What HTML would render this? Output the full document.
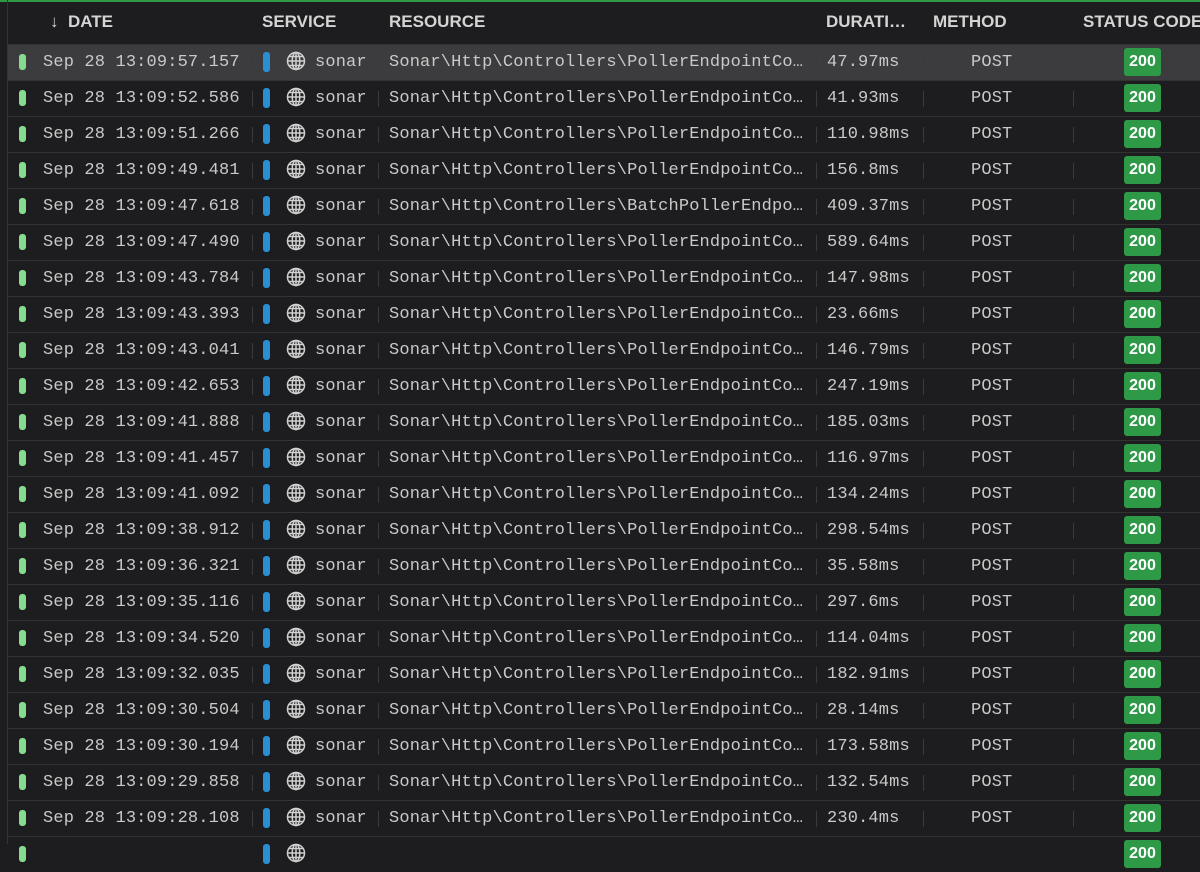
<!DOCTYPE html>
<html><head><meta charset="utf-8"><style>
*{margin:0;padding:0;box-sizing:border-box}
i{font-style:normal}
body{width:1200px;height:844px;overflow:hidden;background:#1d1d1f;font-family:"Liberation Mono",monospace;color:#c9c9c9;position:relative}
.top{position:absolute;left:0;top:0;width:1200px;height:2px;background:#2f9a45}
.lb{position:absolute;left:7px;top:0;width:1px;height:844px;background:#333}
.hd{position:absolute;top:0;left:8px;right:0;height:44px;font-family:"Liberation Sans",sans-serif;font-weight:bold;font-size:17px;color:#d4d4d4}
.hd span{position:absolute;top:12px;white-space:nowrap}
.r{position:absolute;left:8px;right:0;height:36px;border-top:1px solid #333}
.r.s{background:#3c3c3e}
.r span{position:absolute;top:8px;font-size:17px;white-space:nowrap;letter-spacing:0.15px}
.g{position:absolute;left:11px;top:9px;width:7px;height:16px;border-radius:3px;background:#86dc8e}
.b{position:absolute;left:255px;top:7px;width:7px;height:20px;border-radius:3px;background:#2a8fd2}
.sep{position:absolute;top:10px;width:1px;height:16px;background:#3a3a3a}
.gl{position:absolute;left:278px;top:6px}
.bd{position:absolute;left:1116px;top:3px;width:37px;height:28px;border-radius:3px;background:#2e9a48;color:#fff;font-family:"Liberation Sans",sans-serif;font-weight:bold;font-size:16px;text-align:center;line-height:28px}
</style></head><body>
<div class="top"></div><div class="lb"></div>
<div class="hd"><span style="left:42px">&#8595;&nbsp; DATE</span><span style="left:254px">SERVICE</span><span style="left:381px">RESOURCE</span><span style="left:818px">DURATI…</span><span style="left:925px">METHOD</span><span style="left:1075px">STATUS CODE</span></div>
<svg width="0" height="0" style="position:absolute"><defs><g id="glb" fill="none" stroke="#d0d0d0" stroke-width="1.5"><circle cx="10" cy="10" r="8.5"/><ellipse cx="10" cy="10" rx="3.8" ry="8.5"/><line x1="10" y1="1.5" x2="10" y2="18.5"/><line x1="1.5" y1="10" x2="18.5" y2="10"/><path d="M3 5.5h14M3 14.5h14"/></g></defs></svg>
<div class="r s" style="top:44px"><i class="g"></i><span style="left:35px">Sep 28 13:09:57.157</span><i class="sep" style="left:244px"></i><i class="b"></i><svg class="gl" width="20" height="20"><use href="#glb"/></svg><span style="left:307px">sonar</span><i class="sep" style="left:370px"></i><span style="left:381px">Sonar\Http\Controllers\PollerEndpointCo…</span><i class="sep" style="left:808px"></i><span style="left:819px">47.97ms</span><i class="sep" style="left:915px"></i><span style="left:963px">POST</span><i class="sep" style="left:1065px"></i><i class="bd">200</i></div>
<div class="r" style="top:80px"><i class="g"></i><span style="left:35px">Sep 28 13:09:52.586</span><i class="sep" style="left:244px"></i><i class="b"></i><svg class="gl" width="20" height="20"><use href="#glb"/></svg><span style="left:307px">sonar</span><i class="sep" style="left:370px"></i><span style="left:381px">Sonar\Http\Controllers\PollerEndpointCo…</span><i class="sep" style="left:808px"></i><span style="left:819px">41.93ms</span><i class="sep" style="left:915px"></i><span style="left:963px">POST</span><i class="sep" style="left:1065px"></i><i class="bd">200</i></div>
<div class="r" style="top:116px"><i class="g"></i><span style="left:35px">Sep 28 13:09:51.266</span><i class="sep" style="left:244px"></i><i class="b"></i><svg class="gl" width="20" height="20"><use href="#glb"/></svg><span style="left:307px">sonar</span><i class="sep" style="left:370px"></i><span style="left:381px">Sonar\Http\Controllers\PollerEndpointCo…</span><i class="sep" style="left:808px"></i><span style="left:819px">110.98ms</span><i class="sep" style="left:915px"></i><span style="left:963px">POST</span><i class="sep" style="left:1065px"></i><i class="bd">200</i></div>
<div class="r" style="top:152px"><i class="g"></i><span style="left:35px">Sep 28 13:09:49.481</span><i class="sep" style="left:244px"></i><i class="b"></i><svg class="gl" width="20" height="20"><use href="#glb"/></svg><span style="left:307px">sonar</span><i class="sep" style="left:370px"></i><span style="left:381px">Sonar\Http\Controllers\PollerEndpointCo…</span><i class="sep" style="left:808px"></i><span style="left:819px">156.8ms</span><i class="sep" style="left:915px"></i><span style="left:963px">POST</span><i class="sep" style="left:1065px"></i><i class="bd">200</i></div>
<div class="r" style="top:188px"><i class="g"></i><span style="left:35px">Sep 28 13:09:47.618</span><i class="sep" style="left:244px"></i><i class="b"></i><svg class="gl" width="20" height="20"><use href="#glb"/></svg><span style="left:307px">sonar</span><i class="sep" style="left:370px"></i><span style="left:381px">Sonar\Http\Controllers\BatchPollerEndpo…</span><i class="sep" style="left:808px"></i><span style="left:819px">409.37ms</span><i class="sep" style="left:915px"></i><span style="left:963px">POST</span><i class="sep" style="left:1065px"></i><i class="bd">200</i></div>
<div class="r" style="top:224px"><i class="g"></i><span style="left:35px">Sep 28 13:09:47.490</span><i class="sep" style="left:244px"></i><i class="b"></i><svg class="gl" width="20" height="20"><use href="#glb"/></svg><span style="left:307px">sonar</span><i class="sep" style="left:370px"></i><span style="left:381px">Sonar\Http\Controllers\PollerEndpointCo…</span><i class="sep" style="left:808px"></i><span style="left:819px">589.64ms</span><i class="sep" style="left:915px"></i><span style="left:963px">POST</span><i class="sep" style="left:1065px"></i><i class="bd">200</i></div>
<div class="r" style="top:260px"><i class="g"></i><span style="left:35px">Sep 28 13:09:43.784</span><i class="sep" style="left:244px"></i><i class="b"></i><svg class="gl" width="20" height="20"><use href="#glb"/></svg><span style="left:307px">sonar</span><i class="sep" style="left:370px"></i><span style="left:381px">Sonar\Http\Controllers\PollerEndpointCo…</span><i class="sep" style="left:808px"></i><span style="left:819px">147.98ms</span><i class="sep" style="left:915px"></i><span style="left:963px">POST</span><i class="sep" style="left:1065px"></i><i class="bd">200</i></div>
<div class="r" style="top:296px"><i class="g"></i><span style="left:35px">Sep 28 13:09:43.393</span><i class="sep" style="left:244px"></i><i class="b"></i><svg class="gl" width="20" height="20"><use href="#glb"/></svg><span style="left:307px">sonar</span><i class="sep" style="left:370px"></i><span style="left:381px">Sonar\Http\Controllers\PollerEndpointCo…</span><i class="sep" style="left:808px"></i><span style="left:819px">23.66ms</span><i class="sep" style="left:915px"></i><span style="left:963px">POST</span><i class="sep" style="left:1065px"></i><i class="bd">200</i></div>
<div class="r" style="top:332px"><i class="g"></i><span style="left:35px">Sep 28 13:09:43.041</span><i class="sep" style="left:244px"></i><i class="b"></i><svg class="gl" width="20" height="20"><use href="#glb"/></svg><span style="left:307px">sonar</span><i class="sep" style="left:370px"></i><span style="left:381px">Sonar\Http\Controllers\PollerEndpointCo…</span><i class="sep" style="left:808px"></i><span style="left:819px">146.79ms</span><i class="sep" style="left:915px"></i><span style="left:963px">POST</span><i class="sep" style="left:1065px"></i><i class="bd">200</i></div>
<div class="r" style="top:368px"><i class="g"></i><span style="left:35px">Sep 28 13:09:42.653</span><i class="sep" style="left:244px"></i><i class="b"></i><svg class="gl" width="20" height="20"><use href="#glb"/></svg><span style="left:307px">sonar</span><i class="sep" style="left:370px"></i><span style="left:381px">Sonar\Http\Controllers\PollerEndpointCo…</span><i class="sep" style="left:808px"></i><span style="left:819px">247.19ms</span><i class="sep" style="left:915px"></i><span style="left:963px">POST</span><i class="sep" style="left:1065px"></i><i class="bd">200</i></div>
<div class="r" style="top:404px"><i class="g"></i><span style="left:35px">Sep 28 13:09:41.888</span><i class="sep" style="left:244px"></i><i class="b"></i><svg class="gl" width="20" height="20"><use href="#glb"/></svg><span style="left:307px">sonar</span><i class="sep" style="left:370px"></i><span style="left:381px">Sonar\Http\Controllers\PollerEndpointCo…</span><i class="sep" style="left:808px"></i><span style="left:819px">185.03ms</span><i class="sep" style="left:915px"></i><span style="left:963px">POST</span><i class="sep" style="left:1065px"></i><i class="bd">200</i></div>
<div class="r" style="top:440px"><i class="g"></i><span style="left:35px">Sep 28 13:09:41.457</span><i class="sep" style="left:244px"></i><i class="b"></i><svg class="gl" width="20" height="20"><use href="#glb"/></svg><span style="left:307px">sonar</span><i class="sep" style="left:370px"></i><span style="left:381px">Sonar\Http\Controllers\PollerEndpointCo…</span><i class="sep" style="left:808px"></i><span style="left:819px">116.97ms</span><i class="sep" style="left:915px"></i><span style="left:963px">POST</span><i class="sep" style="left:1065px"></i><i class="bd">200</i></div>
<div class="r" style="top:476px"><i class="g"></i><span style="left:35px">Sep 28 13:09:41.092</span><i class="sep" style="left:244px"></i><i class="b"></i><svg class="gl" width="20" height="20"><use href="#glb"/></svg><span style="left:307px">sonar</span><i class="sep" style="left:370px"></i><span style="left:381px">Sonar\Http\Controllers\PollerEndpointCo…</span><i class="sep" style="left:808px"></i><span style="left:819px">134.24ms</span><i class="sep" style="left:915px"></i><span style="left:963px">POST</span><i class="sep" style="left:1065px"></i><i class="bd">200</i></div>
<div class="r" style="top:512px"><i class="g"></i><span style="left:35px">Sep 28 13:09:38.912</span><i class="sep" style="left:244px"></i><i class="b"></i><svg class="gl" width="20" height="20"><use href="#glb"/></svg><span style="left:307px">sonar</span><i class="sep" style="left:370px"></i><span style="left:381px">Sonar\Http\Controllers\PollerEndpointCo…</span><i class="sep" style="left:808px"></i><span style="left:819px">298.54ms</span><i class="sep" style="left:915px"></i><span style="left:963px">POST</span><i class="sep" style="left:1065px"></i><i class="bd">200</i></div>
<div class="r" style="top:548px"><i class="g"></i><span style="left:35px">Sep 28 13:09:36.321</span><i class="sep" style="left:244px"></i><i class="b"></i><svg class="gl" width="20" height="20"><use href="#glb"/></svg><span style="left:307px">sonar</span><i class="sep" style="left:370px"></i><span style="left:381px">Sonar\Http\Controllers\PollerEndpointCo…</span><i class="sep" style="left:808px"></i><span style="left:819px">35.58ms</span><i class="sep" style="left:915px"></i><span style="left:963px">POST</span><i class="sep" style="left:1065px"></i><i class="bd">200</i></div>
<div class="r" style="top:584px"><i class="g"></i><span style="left:35px">Sep 28 13:09:35.116</span><i class="sep" style="left:244px"></i><i class="b"></i><svg class="gl" width="20" height="20"><use href="#glb"/></svg><span style="left:307px">sonar</span><i class="sep" style="left:370px"></i><span style="left:381px">Sonar\Http\Controllers\PollerEndpointCo…</span><i class="sep" style="left:808px"></i><span style="left:819px">297.6ms</span><i class="sep" style="left:915px"></i><span style="left:963px">POST</span><i class="sep" style="left:1065px"></i><i class="bd">200</i></div>
<div class="r" style="top:620px"><i class="g"></i><span style="left:35px">Sep 28 13:09:34.520</span><i class="sep" style="left:244px"></i><i class="b"></i><svg class="gl" width="20" height="20"><use href="#glb"/></svg><span style="left:307px">sonar</span><i class="sep" style="left:370px"></i><span style="left:381px">Sonar\Http\Controllers\PollerEndpointCo…</span><i class="sep" style="left:808px"></i><span style="left:819px">114.04ms</span><i class="sep" style="left:915px"></i><span style="left:963px">POST</span><i class="sep" style="left:1065px"></i><i class="bd">200</i></div>
<div class="r" style="top:656px"><i class="g"></i><span style="left:35px">Sep 28 13:09:32.035</span><i class="sep" style="left:244px"></i><i class="b"></i><svg class="gl" width="20" height="20"><use href="#glb"/></svg><span style="left:307px">sonar</span><i class="sep" style="left:370px"></i><span style="left:381px">Sonar\Http\Controllers\PollerEndpointCo…</span><i class="sep" style="left:808px"></i><span style="left:819px">182.91ms</span><i class="sep" style="left:915px"></i><span style="left:963px">POST</span><i class="sep" style="left:1065px"></i><i class="bd">200</i></div>
<div class="r" style="top:692px"><i class="g"></i><span style="left:35px">Sep 28 13:09:30.504</span><i class="sep" style="left:244px"></i><i class="b"></i><svg class="gl" width="20" height="20"><use href="#glb"/></svg><span style="left:307px">sonar</span><i class="sep" style="left:370px"></i><span style="left:381px">Sonar\Http\Controllers\PollerEndpointCo…</span><i class="sep" style="left:808px"></i><span style="left:819px">28.14ms</span><i class="sep" style="left:915px"></i><span style="left:963px">POST</span><i class="sep" style="left:1065px"></i><i class="bd">200</i></div>
<div class="r" style="top:728px"><i class="g"></i><span style="left:35px">Sep 28 13:09:30.194</span><i class="sep" style="left:244px"></i><i class="b"></i><svg class="gl" width="20" height="20"><use href="#glb"/></svg><span style="left:307px">sonar</span><i class="sep" style="left:370px"></i><span style="left:381px">Sonar\Http\Controllers\PollerEndpointCo…</span><i class="sep" style="left:808px"></i><span style="left:819px">173.58ms</span><i class="sep" style="left:915px"></i><span style="left:963px">POST</span><i class="sep" style="left:1065px"></i><i class="bd">200</i></div>
<div class="r" style="top:764px"><i class="g"></i><span style="left:35px">Sep 28 13:09:29.858</span><i class="sep" style="left:244px"></i><i class="b"></i><svg class="gl" width="20" height="20"><use href="#glb"/></svg><span style="left:307px">sonar</span><i class="sep" style="left:370px"></i><span style="left:381px">Sonar\Http\Controllers\PollerEndpointCo…</span><i class="sep" style="left:808px"></i><span style="left:819px">132.54ms</span><i class="sep" style="left:915px"></i><span style="left:963px">POST</span><i class="sep" style="left:1065px"></i><i class="bd">200</i></div>
<div class="r" style="top:800px"><i class="g"></i><span style="left:35px">Sep 28 13:09:28.108</span><i class="sep" style="left:244px"></i><i class="b"></i><svg class="gl" width="20" height="20"><use href="#glb"/></svg><span style="left:307px">sonar</span><i class="sep" style="left:370px"></i><span style="left:381px">Sonar\Http\Controllers\PollerEndpointCo…</span><i class="sep" style="left:808px"></i><span style="left:819px">230.4ms</span><i class="sep" style="left:915px"></i><span style="left:963px">POST</span><i class="sep" style="left:1065px"></i><i class="bd">200</i></div>
<div class="r" style="top:836px"><i class="g"></i><i class="b"></i><svg class="gl" width="20" height="20"><use href="#glb"/></svg><i class="bd">200</i></div>
</body></html>
